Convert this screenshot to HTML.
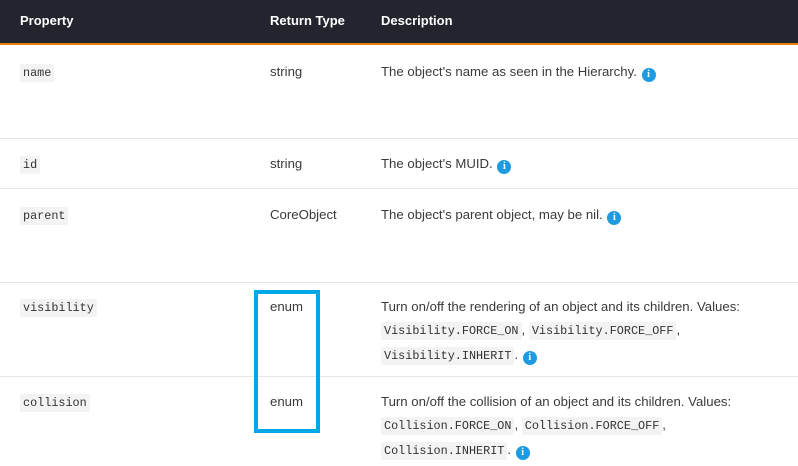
<!DOCTYPE html>
<html><head><style>
body{margin:0;width:798px;height:466px;overflow:hidden;background:#fff;font-family:"Liberation Sans",sans-serif;font-size:13.2px;color:#3a3a3a;position:relative}
.hd{position:absolute;left:0;top:0;width:798px;height:43px;background:#22252e;border-bottom:2px solid #e8820c}
.hd span{position:absolute;top:13px;color:#fff;font-weight:bold;font-size:13px}
.t{position:absolute;white-space:nowrap;line-height:23px}
.sep{position:absolute;left:0;width:798px;height:1px;background:#e6e6e6}
code{font-family:"Liberation Mono",monospace;font-size:11.8px;background:#f3f3f3;padding:2px 3px;border-radius:2px;color:#333}
.i{display:inline-block;width:14px;height:14px;border-radius:50%;background:#1e9be0;color:#fff;font-size:10px;font-weight:bold;text-align:center;line-height:14px;vertical-align:-1px;font-family:"Liberation Serif",serif;margin-left:1px}
.box{position:absolute;left:254px;top:290px;width:58px;height:135px;border:4px solid #00a8e8}
</style></head><body>
<div class="hd"><span style="left:20px">Property</span><span style="left:270px">Return Type</span><span style="left:381px">Description</span></div>

<div class="t" style="left:20px;top:60px"><code>name</code></div>
<div class="t" style="left:270px;top:60px">string</div>
<div class="t" style="left:381px;top:60px">The object's name as seen in the Hierarchy. <span class="i">i</span></div>
<div class="sep" style="top:138px"></div>

<div class="t" style="left:20px;top:152px"><code>id</code></div>
<div class="t" style="left:270px;top:152px">string</div>
<div class="t" style="left:381px;top:152px">The object's MUID. <span class="i">i</span></div>
<div class="sep" style="top:188px"></div>

<div class="t" style="left:20px;top:203px"><code>parent</code></div>
<div class="t" style="left:270px;top:203px">CoreObject</div>
<div class="t" style="left:381px;top:203px">The object's parent object, may be nil. <span class="i">i</span></div>
<div class="sep" style="top:282px"></div>

<div class="t" style="left:20px;top:295px"><code>visibility</code></div>
<div class="t" style="left:270px;top:295px">enum</div>
<div class="t" style="left:381px;top:295px">Turn on/off the rendering of an object and its children. Values:<br><code>Visibility.FORCE_ON</code>, <code>Visibility.FORCE_OFF</code>,<br><code>Visibility.INHERIT</code>. <span class="i">i</span></div>
<div class="sep" style="top:376px"></div>

<div class="t" style="left:20px;top:390px"><code>collision</code></div>
<div class="t" style="left:270px;top:390px">enum</div>
<div class="t" style="left:381px;top:390px">Turn on/off the collision of an object and its children. Values:<br><code>Collision.FORCE_ON</code>, <code>Collision.FORCE_OFF</code>,<br><code>Collision.INHERIT</code>. <span class="i">i</span></div>

<div class="box"></div>
</body></html>
